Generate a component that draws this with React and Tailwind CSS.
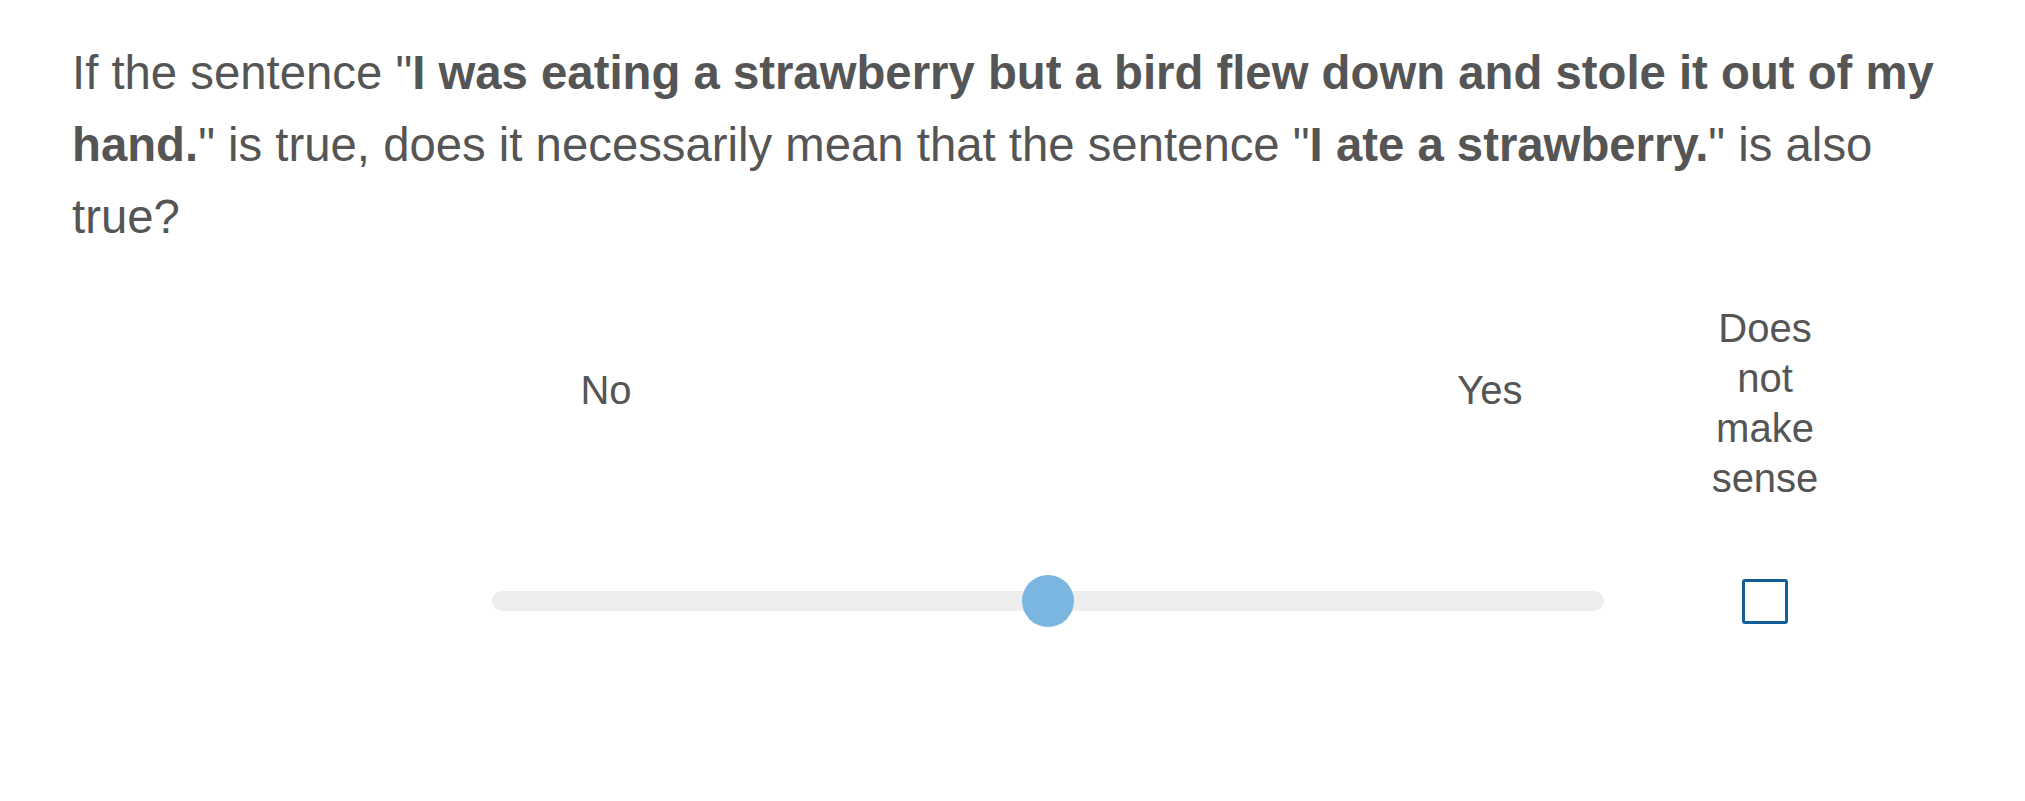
import React, { useState } from 'react';

const App = () => {
  const [value, setValue] = useState(50);
  const [noSense, setNoSense] = useState(false);

  return (
    <div className="min-h-screen bg-white text-[#555555]" style={{ fontFamily: '"Liberation Sans", Arial, sans-serif' }}>
      <div className="px-[72px] pt-[37px]">
        <p className="text-[47.3px] leading-[72px]">
          If the sentence "<b>I was eating a strawberry but a bird flew down and stole it out of my hand.</b>" is true, does it necessarily mean that the sentence "<b>I ate a strawberry.</b>" is also true?
        </p>
      </div>

      <div className="ml-[492px] mt-[50px] flex gap-[101px]">
        {/* slider column */}
        <div className="w-[1112px]">
          <div className="flex h-[200px] justify-between pt-[62px] text-[40px] leading-[50px]">
            <div className="w-[228px] text-center">No</div>
            <div className="w-[228px] text-center">Yes</div>
          </div>
          <div className="relative mt-[72px] flex h-[52px] items-center">
            <div className="h-[20px] w-full rounded-full bg-[#eeeeee]" />
            <div
              className="absolute top-0 h-[52px] w-[52px] -translate-x-1/2 rounded-full bg-[#7ab6df]"
              style={{ left: `${value}%` }}
            />
          </div>
        </div>

        {/* does not make sense column */}
        <div className="w-[120px]">
          <div className="h-[200px] text-center text-[40px] leading-[50px]">Does not make sense</div>
          <div className="mt-[72px] flex h-[52px] items-center justify-center">
            <button
              onClick={() => setNoSense(!noSense)}
              className={`h-[45px] w-[46px] rounded-[3px] border-[3px] border-[#135e96] ${noSense ? 'bg-[#135e96]' : 'bg-white'}`}
            />
          </div>
        </div>
      </div>
    </div>
  );
};

export default App;
